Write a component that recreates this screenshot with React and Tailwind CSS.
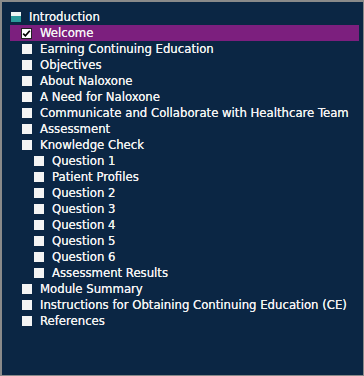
import React from 'react';

const ITEMS = [
  { label: 'Welcome', level: 1, checked: true, active: true },
  { label: 'Earning Continuing Education', level: 1 },
  { label: 'Objectives', level: 1 },
  { label: 'About Naloxone', level: 1 },
  { label: 'A Need for Naloxone', level: 1 },
  { label: 'Communicate and Collaborate with Healthcare Team', level: 1 },
  { label: 'Assessment', level: 1 },
  { label: 'Knowledge Check', level: 1 },
  { label: 'Question 1', level: 2 },
  { label: 'Patient Profiles', level: 2 },
  { label: 'Question 2', level: 2 },
  { label: 'Question 3', level: 2 },
  { label: 'Question 4', level: 2 },
  { label: 'Question 5', level: 2 },
  { label: 'Question 6', level: 2 },
  { label: 'Assessment Results', level: 2 },
  { label: 'Module Summary', level: 1 },
  { label: 'Instructions for Obtaining Continuing Education (CE)', level: 1 },
  { label: 'References', level: 1 },
];

const Box = ({ checked }) =>
  checked ? (
    <span className="w-[11px] h-[11px] -ml-[1px] shrink-0 flex items-center justify-center bg-white border border-[#222]">
      <svg width="9" height="9" viewBox="0 0 9 9">
        <path d="M1.2 4.6 L3.4 6.8 L7.8 1.8" fill="none" stroke="#000" strokeWidth="1.7" />
      </svg>
    </span>
  ) : (
    <span className="w-[10px] h-[10px] shrink-0 bg-[#f4f4f4]" />
  );

const Row = ({ item }) => (
  <div
    className={`h-4 flex items-center gap-2 ${item.active ? 'bg-[#7c1f7e] mr-[4px]' : ''} ${item.level === 2 ? 'pl-[24px]' : 'pl-[12px]'}`}
  >
    <Box checked={item.checked} />
    <span className="leading-4 whitespace-nowrap">{item.label}</span>
  </div>
);

export default function App() {
  return (
    <div
      className="w-[364px] h-[376px] bg-[#0b2644] border-t-2 border-l-2 border-r border-b border-[#8a8a8a] text-[#f2f2f2] text-[13px] pt-[7px] pl-[8px] overflow-hidden [text-shadow:0_0_0.5px_#ffffff]"
      style={{ fontFamily: '"DejaVu Sans Condensed", "DejaVu Sans", sans-serif' }}
    >
      <div className="h-4 flex items-center gap-2 pl-[1px]">
        <span className="w-[10px] h-[10px] flex flex-col shrink-0">
          <span className="h-[4px] bg-[#eef4f4]" />
          <span className="h-[6px] bg-[#2a9a9c]" />
        </span>
        <span className="leading-4">Introduction</span>
      </div>
      {ITEMS.map((it) => (
        <Row key={it.label} item={it} />
      ))}
    </div>
  );
}
